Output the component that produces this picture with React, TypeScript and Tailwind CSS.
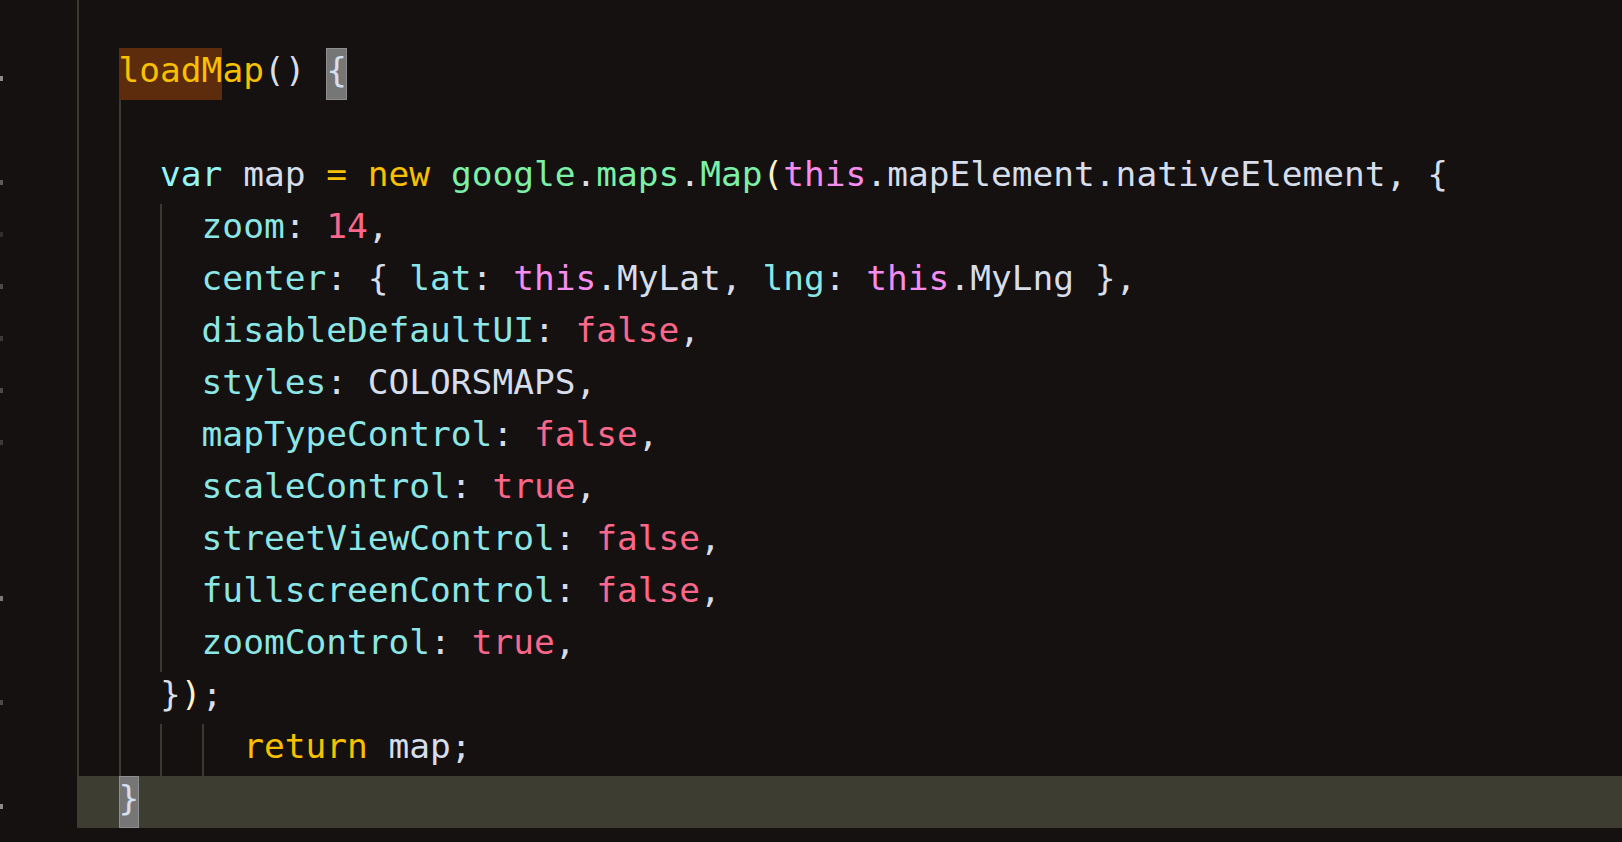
type Kind = "y" | "v" | "k" | "d" | "g" | "p" | "n" | "c";

interface Tok {
  t: string;
  k: Kind;
  sel?: boolean;
  box?: boolean;
}

interface Line {
  col: number;
  guides: number[];
  toks: Tok[];
  hl?: boolean;
  tick?: string;
  h?: string;
}

const colors: Record<Kind, string> = {
  y: "text-[#f9c000]",
  v: "text-[#94f4f8]",
  k: "text-[#8ce6e5]",
  d: "text-[#d6ddeb]",
  g: "text-[#7df0a8]",
  p: "text-[#f68cef]",
  n: "text-[#fa678b]",
  c: "text-[#fff2c6]",
};

const d = (t: string): Tok => ({ t, k: "d" });
const k = (t: string): Tok => ({ t, k: "k" });
const n = (t: string): Tok => ({ t, k: "n" });

const prop = (name: string, value: string): Tok[] => [k(name), d(": "), n(value), d(",")];

const lines: Line[] = [
  { col: 2, guides: [0], toks: [], h: "h-[48px]" },
  {
    col: 2,
    guides: [0],
    tick: "bg-[#8a8a8a]",
    toks: [
      { t: "loadM", k: "y", sel: true },
      { t: "ap", k: "y" },
      d("() "),
      { t: "{", k: "d", box: true },
    ],
  },
  { col: 4, guides: [0, 2], toks: [] },
  {
    col: 4,
    guides: [0, 2],
    tick: "bg-[#5a5a5a]",
    toks: [
      { t: "var", k: "v" },
      d(" map "),
      { t: "=", k: "y" },
      d(" "),
      { t: "new", k: "y" },
      d(" "),
      { t: "google", k: "g" },
      d("."),
      { t: "maps", k: "g" },
      d("."),
      { t: "Map", k: "g" },
      { t: "(", k: "c" },
      { t: "this", k: "p" },
      d(".mapElement.nativeElement, {"),
    ],
  },
  { col: 6, guides: [0, 2, 4], toks: prop("zoom", "14"), tick: "bg-[#2e2e2e]" },
  {
    col: 6,
    guides: [0, 2, 4],
    tick: "bg-[#4a4a4a]",
    toks: [
      k("center"),
      d(": { "),
      k("lat"),
      d(": "),
      { t: "this", k: "p" },
      d(".MyLat, "),
      k("lng"),
      d(": "),
      { t: "this", k: "p" },
      d(".MyLng },"),
    ],
  },
  { col: 6, guides: [0, 2, 4], toks: prop("disableDefaultUI", "false"), tick: "bg-[#3a3a3a]" },
  { col: 6, guides: [0, 2, 4], toks: [k("styles"), d(": COLORSMAPS,")], tick: "bg-[#4a4a4a]" },
  { col: 6, guides: [0, 2, 4], toks: prop("mapTypeControl", "false"), tick: "bg-[#3a3a3a]" },
  { col: 6, guides: [0, 2, 4], toks: prop("scaleControl", "true") },
  { col: 6, guides: [0, 2, 4], toks: prop("streetViewControl", "false") },
  { col: 6, guides: [0, 2, 4], toks: prop("fullscreenControl", "false"), tick: "bg-[#7a7a7a]" },
  { col: 6, guides: [0, 2, 4], toks: prop("zoomControl", "true") },
  { col: 4, guides: [0, 2], toks: [d("}"), { t: ")", k: "c" }, d(";")], tick: "bg-[#4a4a4a]" },
  { col: 8, guides: [0, 2, 4, 6], toks: [{ t: "return", k: "y" }, d(" map;")] },
  { col: 2, guides: [], toks: [{ t: "}", k: "d", box: true }], hl: true, tick: "bg-[#8a8a8a]" },
  { col: 0, guides: [0], toks: [] },
];

function CodeLine({ line }: { line: Line }) {
  const cells = Array.from({ length: line.col / 2 }, (_, i) => i * 2);
  return (
    <div className={`flex ${line.h ?? "h-[52px]"}`}>
      <div className="flex w-[77px] shrink-0 items-center pt-[8px]">
        {line.tick && <span className={`h-[5px] w-[3px] ${line.tick}`} />}
      </div>
      <div className={`flex flex-1 ${line.hl ? "bg-[#3e3d32]" : ""}`}>
        {cells.map((c) => (
          <span
            key={c}
            className={`w-[2ch] shrink-0 ${line.guides.includes(c) ? "border-l-2 border-[#3b3a32]" : ""}`}
          />
        ))}
        <span className="whitespace-pre leading-[44px]">
          {line.toks.map((tok, i) => {
            const extra = tok.sel
              ? "inline-block h-[52px] align-top bg-[#5c2c0d]"
              : tok.box
                ? "inline-block h-[52px] align-top bg-[#767676] shadow-[inset_0_0_0_1px_#8e8e8e]"
                : "";
            return (
              <span key={i} className={`${colors[tok.k]} ${extra}`}>
                {tok.t}
              </span>
            );
          })}
        </span>
      </div>
    </div>
  );
}

export default function App() {
  return (
    <div className="h-[842px] w-full overflow-hidden bg-[#141110] font-['DejaVu_Sans_Mono',monospace] text-[34.5px]">
      {lines.map((line, i) => (
        <CodeLine key={i} line={line} />
      ))}
    </div>
  );
}
